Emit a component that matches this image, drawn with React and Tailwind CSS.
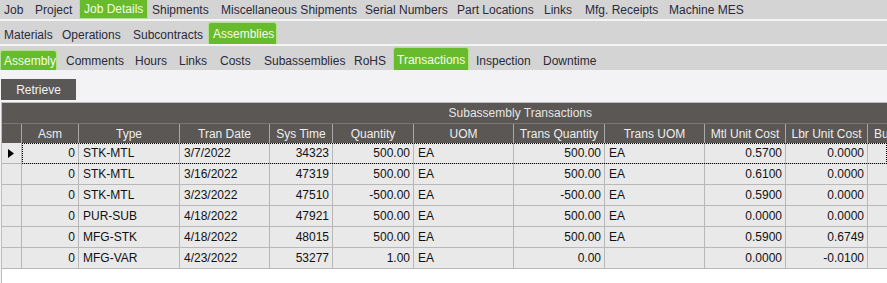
import React from "react"

const font = { fontFamily: '"Liberation Sans", Arial, sans-serif' }

const topTabs = [
  ["Job", "w-[31px]"],
  ["Project", "w-[48px]"],
  ["Job Details", "w-[69px]", true],
  ["Shipments", "w-[69px]"],
  ["Miscellaneous Shipments", "w-[144px]"],
  ["Serial Numbers", "w-[92px]"],
  ["Part Locations", "w-[87px]"],
  ["Links", "w-[41px]"],
  ["Mfg. Receipts", "w-[84px]"],
  ["Machine MES", "w-[100px]"],
]

const midTabs = [
  ["Materials", "w-[58px]"],
  ["Operations", "w-[71px]"],
  ["Subcontracts", "w-[79px]"],
  ["Assemblies", "w-[69px]", true],
]

const subTabs = [
  ["Assembly", "w-[57px] mr-[5px]", true],
  ["Comments", "w-[69px]"],
  ["Hours", "w-[44px]"],
  ["Links", "w-[41px]"],
  ["Costs", "w-[44px]"],
  ["Subassemblies", "w-[90px]"],
  ["RoHS", "w-[43px]"],
  ["Transactions", "w-[76px] mr-[3px]", true],
  ["Inspection", "w-[67px]"],
  ["Downtime", "w-[70px]"],
]

const cols = [
  { label: "Asm", w: "w-[57px]", r: true },
  { label: "Type", w: "w-[101px]" },
  { label: "Tran Date", w: "w-[90px]" },
  { label: "Sys Time", w: "w-[63px]", r: true },
  { label: "Quantity", w: "w-[81px]", r: true },
  { label: "UOM", w: "w-[100px]" },
  { label: "Trans Quantity", w: "w-[91px]", r: true },
  { label: "Trans UOM", w: "w-[100px]" },
  { label: "Mtl Unit Cost", w: "w-[81px]", r: true },
  { label: "Lbr Unit Cost", w: "w-[82px]", r: true },
  { label: "Bu", w: "w-[40px]" },
]

const rows = [
  ["0", "STK-MTL", "3/7/2022", "34323", "500.00", "EA", "500.00", "EA", "0.5700", "0.0000", ""],
  ["0", "STK-MTL", "3/16/2022", "47319", "500.00", "EA", "500.00", "EA", "0.6100", "0.0000", ""],
  ["0", "STK-MTL", "3/23/2022", "47510", "-500.00", "EA", "-500.00", "EA", "0.5900", "0.0000", ""],
  ["0", "PUR-SUB", "4/18/2022", "47921", "500.00", "EA", "500.00", "EA", "0.0000", "0.0000", ""],
  ["0", "MFG-STK", "4/18/2022", "48015", "500.00", "EA", "500.00", "EA", "0.5900", "0.6749", ""],
  ["0", "MFG-VAR", "4/23/2022", "53277", "1.00", "EA", "0.00", "", "0.0000", "-0.0100", ""],
]

function TabRow({ tabs, height, active, pad }) {
  return (
    <div className={`flex items-end bg-[#d4d4d4] ${height}`}>
      {tabs.map(([label, w, on]) =>
        on ? (
          <div
            key={label}
            className={`${w} ${active} shrink-0 flex items-center pl-[4px] bg-[#67bb2c] text-[#f4fbe9] border border-[#b3e08c]`}
          >
            {label}
          </div>
        ) : (
          <div
            key={label}
            className={`${w} ${pad} shrink-0 h-full flex items-center pl-[4px] text-[#2a2a3a]`}
          >
            {label}
          </div>
        )
      )}
    </div>
  )
}

export default function App() {
  return (
    <div className="w-[887px] h-[283px] overflow-hidden bg-[#f3f3f5] text-[12px]" style={font}>
      {/* Top tabs */}
      <TabRow tabs={topTabs} height="h-[19px]" active="h-[19px] border-t-0 pb-[1px]" pad="" />
      <div className="h-[2px] bg-[#f4f4f4]" />
      <TabRow tabs={midTabs} height="h-[23px]" active="h-[22px] rounded-t-[3px] border-b-0" pad="pt-[4px]" />
      <div className="h-[2px] bg-[#f4f4f4]" />
      <div className="flex items-end bg-[#d4d4d4] h-[24px]">
        {subTabs.map(([label, w, on]) =>
          on ? (
            <div
              key={label}
              className={`${w} shrink-0 flex pl-[3px] bg-[#67bb2c] text-[#f4fbe9] border border-[#b3e08c] border-b-0 rounded-t-[3px] ${
                label === "Assembly" ? "h-[20px] items-center pt-[1px]" : "h-[23px] items-start pt-[3px]"
              }`}
            >
              {label}
            </div>
          ) : (
            <div key={label} className={`${w} shrink-0 h-full flex items-center pt-[6px] pl-[4px] text-[#2a2a3a]`}>
              {label}
            </div>
          )
        )}
      </div>

      {/* Retrieve button */}
      <div className="pt-[9px] pl-[1px]">
        <button className="w-[75px] h-[21px] bg-[#5a5856] text-[#f2f2f2] flex items-center justify-center">
          Retrieve
        </button>
      </div>

      {/* Grid */}
      <div className="mt-[2px] ml-[1px] border-l border-t border-[#bdbdbd] bg-white h-[200px]">
        <div className="h-[20px] bg-[#5a5754] text-[#e6e6e6] flex items-center justify-end pr-[295px]">
          Subassembly Transactions
        </div>
        <div className="flex h-[20px] bg-[#5a5754] border-t border-[#777] text-[#eeeeee]">
          <div className="w-[20px] shrink-0 border-r border-[#a8a8a8]" />
          {cols.map((c) => (
            <div
              key={c.label}
              className={`${c.w} shrink-0 overflow-hidden whitespace-nowrap border-r border-[#a8a8a8] flex items-center ${
                c.label === "Bu" ? "justify-start pl-[6px]" : "justify-center"
              }`}
            >
              {c.label}
            </div>
          ))}
        </div>
        {rows.map((row, i) => (
          <div key={i} className="relative flex h-[21px] bg-[#e9e9e9] border-b border-[#b8b8b8] text-[#111]">
            <div className="w-[20px] shrink-0 border-r border-[#b8b8b8] flex items-center pl-[6px]">
              {i === 0 && (
                <svg width="6" height="9" viewBox="0 0 6 9">
                  <path d="M0 0 L6 4.5 L0 9 Z" fill="#000" />
                </svg>
              )}
            </div>
            {cols.map((c, j) => (
              <div
                key={c.label}
                className={`${c.w} shrink-0 border-r border-[#b8b8b8] flex items-center ${
                  c.r ? "justify-end pr-[3px]" : "justify-start pl-[4px]"
                }`}
              >
                {row[j]}
              </div>
            ))}
            {i === 0 && (
              <div className="absolute left-[20px] right-0 top-0 bottom-[-1px] border border-dotted border-black pointer-events-none" />
            )}
          </div>
        ))}
      </div>
    </div>
  )
}
